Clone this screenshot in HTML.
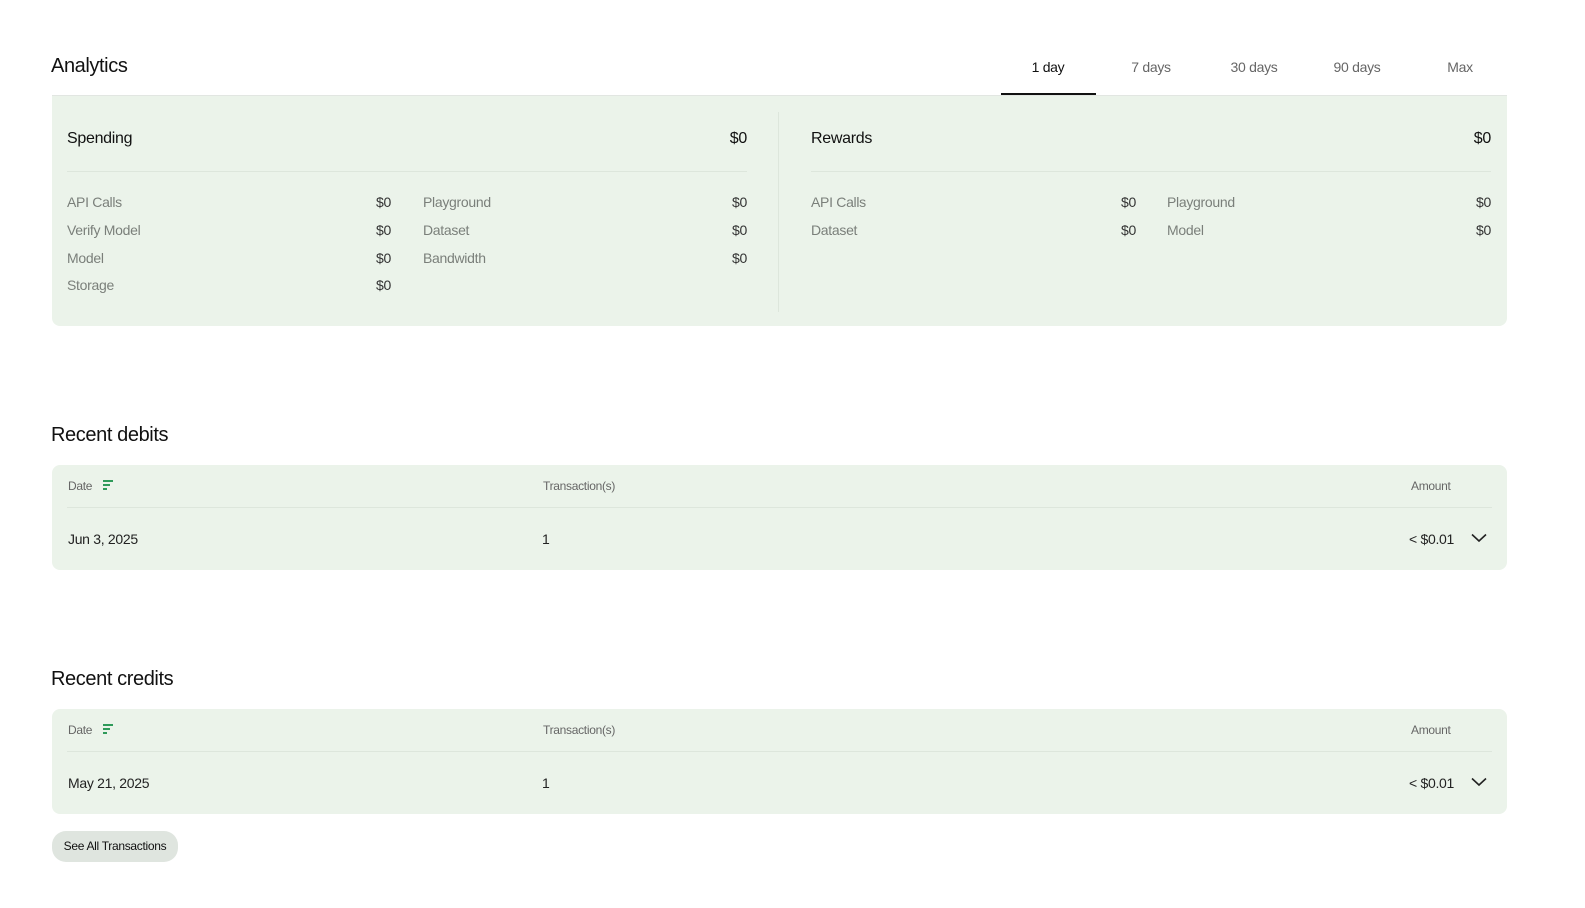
<!DOCTYPE html>
<html><head><style>
*{margin:0;padding:0;box-sizing:border-box}
body{width:1585px;height:908px;background:#fff;font-family:"Liberation Sans",sans-serif;position:relative;overflow:hidden;color:#1a1a1a;letter-spacing:-0.3px}
.a{position:absolute;white-space:nowrap}
.h{font-size:20px;color:#111;letter-spacing:-0.4px}
.tab{font-size:14px;color:#666;transform:translateX(-50%)}
.panel{position:absolute;background:#ebf3ea}
.l{font-size:14px;color:#7a7f7a}
.v{font-size:14px;color:#333;text-align:right}
.t{font-size:16px;color:#111}
.th{font-size:12px;color:#666}
.td{font-size:14px;color:#222}
.line{position:absolute;height:1px;background:#dde6dc}
</style></head><body>
<div class="a h" style="left:51px;top:55px">Analytics</div>
<div class="a tab" style="left:1048px;top:59px;color:#111">1 day</div>
<div class="a tab" style="left:1151px;top:59px">7 days</div>
<div class="a tab" style="left:1254px;top:59px">30 days</div>
<div class="a tab" style="left:1357px;top:59px">90 days</div>
<div class="a tab" style="left:1460px;top:59px">Max</div>
<div class="line" style="left:52px;top:95px;width:1455px;background:#e2e6e2"></div>
<div class="a" style="left:1001px;top:93px;width:95px;height:2px;background:#111"></div>

<div class="panel" style="left:52px;top:96px;width:1455px;height:230px;border-radius:0 0 8px 8px"></div>
<div class="a" style="left:778px;top:112px;width:1px;height:200px;background:#dde6dc"></div>
<div class="a t" style="left:67px;top:130px">Spending</div>
<div class="a t" style="left:700px;top:130px;width:47px;text-align:right">$0</div>
<div class="line" style="left:67px;top:171px;width:680px"></div>
<div class="a t" style="left:811px;top:130px">Rewards</div>
<div class="a t" style="left:1440px;top:130px;width:51px;text-align:right">$0</div>
<div class="line" style="left:811px;top:171px;width:680px"></div>

<div class="a l" style="left:67px;top:194px">API Calls</div><div class="a v" style="left:340px;top:194px;width:51px">$0</div>
<div class="a l" style="left:67px;top:222px">Verify Model</div><div class="a v" style="left:340px;top:222px;width:51px">$0</div>
<div class="a l" style="left:67px;top:250px">Model</div><div class="a v" style="left:340px;top:250px;width:51px">$0</div>
<div class="a l" style="left:67px;top:277px">Storage</div><div class="a v" style="left:340px;top:277px;width:51px">$0</div>
<div class="a l" style="left:423px;top:194px">Playground</div><div class="a v" style="left:696px;top:194px;width:51px">$0</div>
<div class="a l" style="left:423px;top:222px">Dataset</div><div class="a v" style="left:696px;top:222px;width:51px">$0</div>
<div class="a l" style="left:423px;top:250px">Bandwidth</div><div class="a v" style="left:696px;top:250px;width:51px">$0</div>
<div class="a l" style="left:811px;top:194px">API Calls</div><div class="a v" style="left:1085px;top:194px;width:51px">$0</div>
<div class="a l" style="left:811px;top:222px">Dataset</div><div class="a v" style="left:1085px;top:222px;width:51px">$0</div>
<div class="a l" style="left:1167px;top:194px">Playground</div><div class="a v" style="left:1440px;top:194px;width:51px">$0</div>
<div class="a l" style="left:1167px;top:222px">Model</div><div class="a v" style="left:1440px;top:222px;width:51px">$0</div>

<div class="a h" style="left:51px;top:424px">Recent debits</div>
<div class="panel" style="left:52px;top:465px;width:1455px;height:105px;border-radius:8px"></div>
<div class="a th" style="left:68px;top:479px">Date</div>
<svg class="a" style="left:103px;top:480px" width="10" height="11"><rect x="0" y="0" width="10" height="2" fill="#2f9a5a"/><rect x="0" y="4" width="7" height="2" fill="#2f9a5a"/><rect x="0" y="8" width="4" height="2" fill="#2f9a5a"/></svg>
<div class="a th" style="left:543px;top:479px">Transaction(s)</div>
<div class="a th" style="left:1411px;top:479px">Amount</div>
<div class="line" style="left:67px;top:507px;width:1425px"></div>
<div class="a td" style="left:68px;top:531px">Jun 3, 2025</div>
<div class="a td" style="left:542px;top:531px">1</div>
<div class="a td" style="left:1409px;top:531px">&lt; $0.01</div>
<svg class="a" style="left:1471px;top:533px" width="16" height="10"><path d="M1 1.5L8 8L15 1.5" fill="none" stroke="#222" stroke-width="1.6"/></svg>

<div class="a h" style="left:51px;top:668px">Recent credits</div>
<div class="panel" style="left:52px;top:709px;width:1455px;height:105px;border-radius:8px"></div>
<div class="a th" style="left:68px;top:723px">Date</div>
<svg class="a" style="left:103px;top:724px" width="10" height="11"><rect x="0" y="0" width="10" height="2" fill="#2f9a5a"/><rect x="0" y="4" width="7" height="2" fill="#2f9a5a"/><rect x="0" y="8" width="4" height="2" fill="#2f9a5a"/></svg>
<div class="a th" style="left:543px;top:723px">Transaction(s)</div>
<div class="a th" style="left:1411px;top:723px">Amount</div>
<div class="line" style="left:67px;top:751px;width:1425px"></div>
<div class="a td" style="left:68px;top:775px">May 21, 2025</div>
<div class="a td" style="left:542px;top:775px">1</div>
<div class="a td" style="left:1409px;top:775px">&lt; $0.01</div>
<svg class="a" style="left:1471px;top:777px" width="16" height="10"><path d="M1 1.5L8 8L15 1.5" fill="none" stroke="#222" stroke-width="1.6"/></svg>

<div class="a" style="left:52px;top:831px;width:126px;height:31px;border-radius:14px;background:#dfe5df;font-size:12px;color:#111;text-align:center;line-height:31px">See All Transactions</div>
</body></html>
